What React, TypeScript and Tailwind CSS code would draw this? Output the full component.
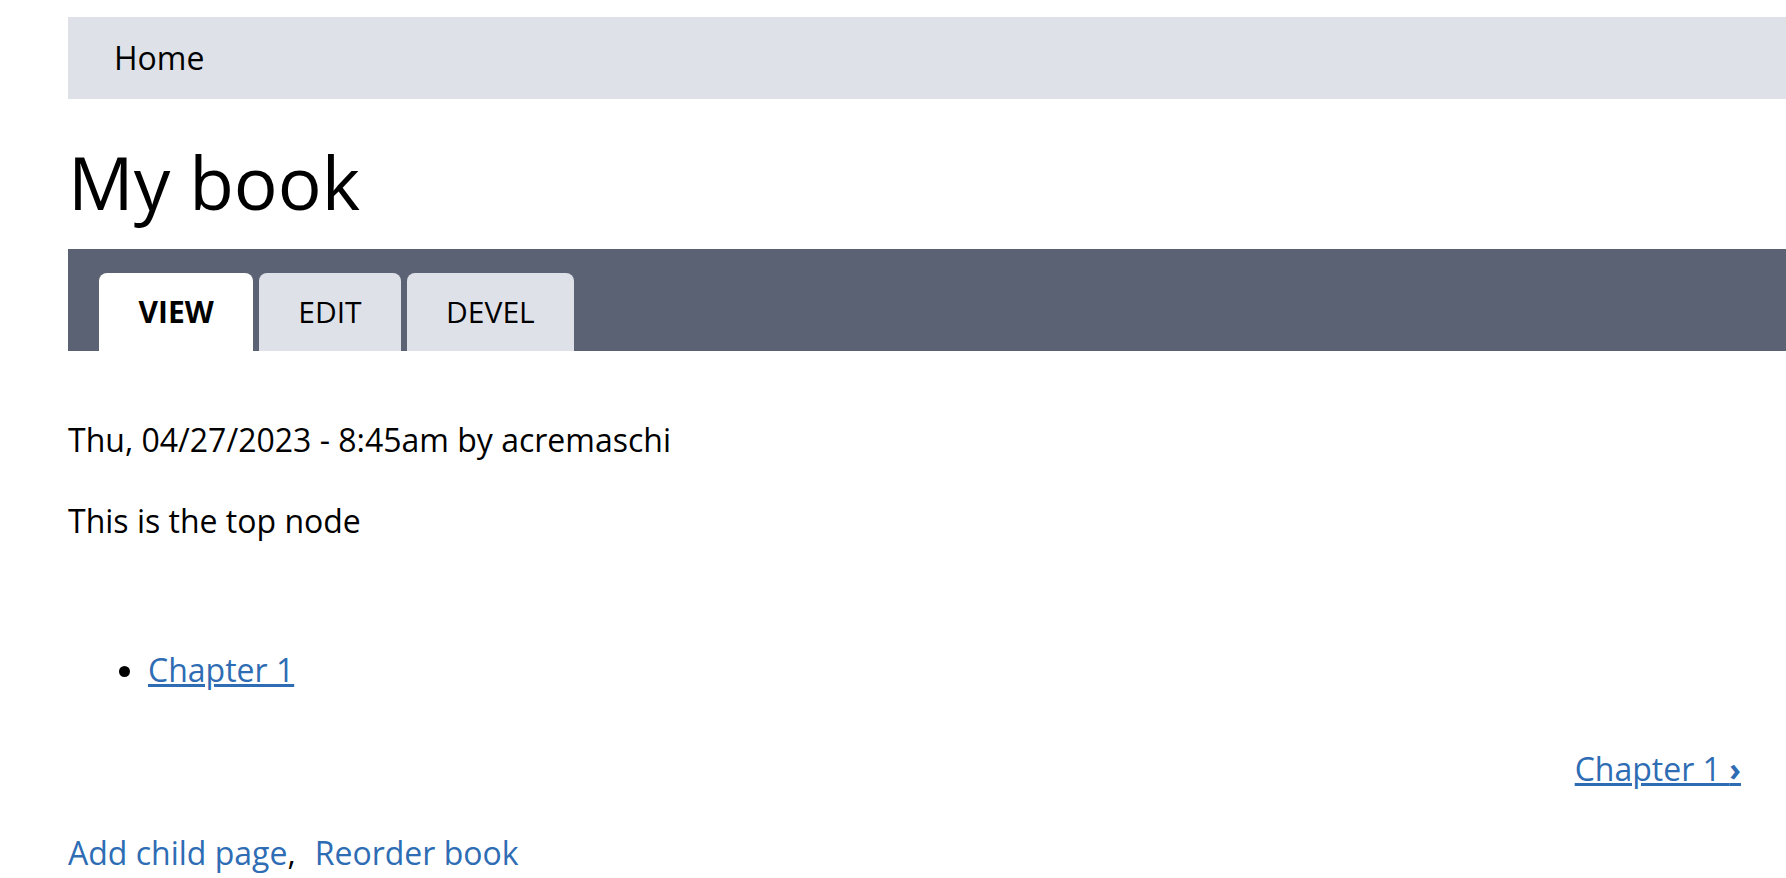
const linkColor = 'text-[#2e6db4]';

const tabs = [
  { label: 'VIEW', active: true },
  { label: 'EDIT', active: false },
  { label: 'DEVEL', active: false },
];

export default function App() {
  return (
    <div className="min-h-screen bg-white pl-[68px] pt-[17px] text-black font-['Open_Sans',sans-serif]">
      <nav className="h-[82px] bg-[#dfe1e8] px-[46px] flex items-center text-[32px]">
        Home
      </nav>

      <h1 className="mt-[39px] mb-[23px] text-[73px] leading-[1.2] font-normal">My book</h1>

      <div className="h-[102px] bg-[#5b6273] pl-[31px] flex items-end gap-[5.5px]">
        {tabs.map((tab) => (
          <div
            key={tab.label}
            className={
              tab.active
                ? 'h-[78px] px-[39.5px] rounded-t-[8px] bg-white flex items-center text-[30px] font-bold'
                : 'h-[78px] px-[39.5px] rounded-t-[8px] bg-[#dfe1e8] flex items-center text-[30px]'
            }
          >
            {tab.label}
          </div>
        ))}
      </div>

      <div className="pr-[45px] text-[32px] leading-[48px]">
        <p className="mt-[65px]">Thu, 04/27/2023 - 8:45am by acremaschi</p>
        <p className="mt-[33px]">This is the top node</p>

        <ul className="mt-[101px] pl-[80px] list-disc">
          <li>
            <a href="#" className={`${linkColor} underline`}>Chapter 1</a>
          </li>
        </ul>

        <div className="mt-[51px] flex justify-end">
          <a href="#" className={`${linkColor} underline`}>
            Chapter 1 <span className="font-bold">›</span>
          </a>
        </div>

        <div className="mt-[36px] flex">
          <a href="#" className={linkColor}>Add child page</a>
          <span>,</span>
          <a href="#" className={`${linkColor} ml-[19px]`}>Reorder book</a>
        </div>
      </div>
    </div>
  );
}
